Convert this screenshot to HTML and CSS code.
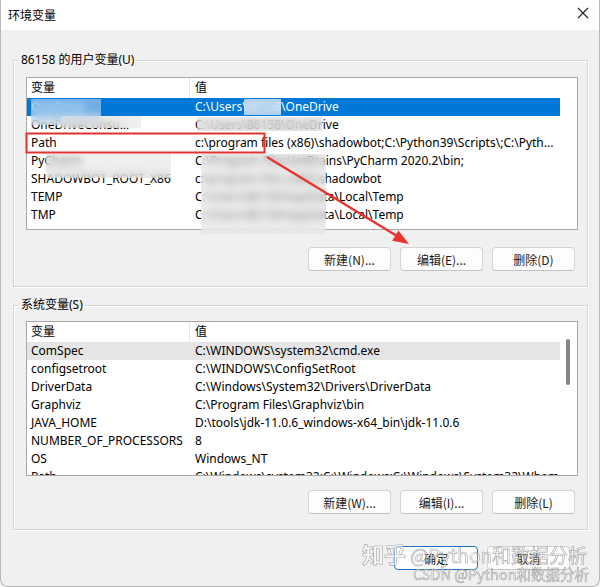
FILE: index.html
```html
<!DOCTYPE html>
<html lang="zh-CN">
<head>
    <meta charset="UTF-8">
    <meta name="viewport" content="width=device-width, initial-scale=1.0">
    <title>环境变量</title>
    <link rel="stylesheet" href="styles.css">
</head>
<body>
    <div class="dialog">
        <div class="titlebar">
            <span class="title">环境变量</span>
            <svg class="close" width="12" height="12" viewBox="0 0 12 12">
                <path d="M1 1 L11 11 M11 1 L1 11" stroke="#1f1f1f" stroke-width="1.1" fill="none"/>
            </svg>
        </div>

        <div class="content">
            <fieldset class="group group-user">
                <legend>86158 的用户变量(U)</legend>
                <div class="list list-user">
                    <div class="list-head">
                        <span class="col-name">变量</span>
                        <span class="col-value">值</span>
                    </div>
                    <div class="row selected">
                        <span class="col-name">OneDrive</span>
                        <span class="col-value">C:\Users\86158\OneDrive</span>
                    </div>
                    <div class="row">
                        <span class="col-name">OneDriveConsu...</span>
                        <span class="col-value">C:\Users\86158\OneDrive</span>
                    </div>
                    <div class="row">
                        <span class="col-name">Path</span>
                        <span class="col-value">c:\program files (x86)\shadowbot;C:\Python39\Scripts\;C:\Pyth...</span>
                    </div>
                    <div class="row">
                        <span class="col-name">PyCharm</span>
                        <span class="col-value">C:\Program Files\JetBrains\PyCharm 2020.2\bin;</span>
                    </div>
                    <div class="row">
                        <span class="col-name">SHADOWBOT_ROOT_X86</span>
                        <span class="col-value">c:\program files (x86)\shadowbot</span>
                    </div>
                    <div class="row">
                        <span class="col-name">TEMP</span>
                        <span class="col-value">C:\Users\86158\AppData\Local\Temp</span>
                    </div>
                    <div class="row">
                        <span class="col-name">TMP</span>
                        <span class="col-value">C:\Users\86158\AppData\Local\Temp</span>
                    </div>
                </div>
                <div class="buttons">
                    <button class="btn">新建(N)...</button>
                    <button class="btn">编辑(E)...</button>
                    <button class="btn">删除(D)</button>
                </div>
            </fieldset>

            <fieldset class="group group-system">
                <legend>系统变量(S)</legend>
                <div class="list list-system">
                    <div class="list-head">
                        <span class="col-name">变量</span>
                        <span class="col-value">值</span>
                    </div>
                    <div class="row hover">
                        <span class="col-name">ComSpec</span>
                        <span class="col-value">C:\WINDOWS\system32\cmd.exe</span>
                    </div>
                    <div class="row">
                        <span class="col-name">configsetroot</span>
                        <span class="col-value">C:\WINDOWS\ConfigSetRoot</span>
                    </div>
                    <div class="row">
                        <span class="col-name">DriverData</span>
                        <span class="col-value">C:\Windows\System32\Drivers\DriverData</span>
                    </div>
                    <div class="row">
                        <span class="col-name">Graphviz</span>
                        <span class="col-value">C:\Program Files\Graphviz\bin</span>
                    </div>
                    <div class="row">
                        <span class="col-name">JAVA_HOME</span>
                        <span class="col-value">D:\tools\jdk-11.0.6_windows-x64_bin\jdk-11.0.6</span>
                    </div>
                    <div class="row">
                        <span class="col-name">NUMBER_OF_PROCESSORS</span>
                        <span class="col-value">8</span>
                    </div>
                    <div class="row">
                        <span class="col-name">OS</span>
                        <span class="col-value">Windows_NT</span>
                    </div>
                    <div class="row">
                        <span class="col-name">Path</span>
                        <span class="col-value">C:\Windows\system32;C:\Windows;C:\Windows\System32\Wbem;C:\Windows</span>
                    </div>
                    <div class="scroll-thumb"></div>
                </div>
                <div class="buttons">
                    <button class="btn">新建(W)...</button>
                    <button class="btn">编辑(I)...</button>
                    <button class="btn">删除(L)</button>
                </div>
            </fieldset>

            <div class="footer">
                <button class="btn btn-default">确定</button>
                <button class="btn">取消</button>
            </div>
        </div>

        <!-- pixelated patches hiding personal paths -->
        <div class="mosaic m1"></div>
        <div class="mosaic m2"></div>
        <div class="mosaic m3"></div>
        <div class="mosaic m4"></div>
        <div class="mosaic m5"></div>
        <div class="mosaic m6"></div>

        <!-- red markup: box round Path and arrow to the edit button -->
        <svg class="markup" width="600" height="587" viewBox="0 0 600 587">
            <rect x="25.5" y="133.5" width="238" height="19" fill="none" stroke="#e0322e" stroke-width="2"/>
            <line x1="266" y1="157" x2="396" y2="236" stroke="#e8352f" stroke-width="2.5"/>
            <polygon points="408,244 391.2,240.7 397.4,230.5" fill="#e8352f"/>
        </svg>

        <div class="watermark">
            <span class="wm-zhihu"><b>知乎</b> @Python和数据分析</span>
            <span class="wm-csdn">CSDN @Python和数据分析</span>
        </div>
    </div>
</body>
</html>
```

FILE: styles.css
```css
* {
    box-sizing: border-box;
}

body {
    margin: 0;
    background: #f0f0f0;
    font-family: "Noto Sans", "Noto Sans CJK SC", sans-serif;
    font-size: 12px;
    color: #000;
}

.dialog {
    position: relative;
    width: 600px;
    height: 587px;
    background: #f0f0f0;
    border: 1px solid #b8b8b8;
    border-top: none;
    border-radius: 0 0 8px 8px;
    overflow: hidden;
}

.titlebar {
    height: 30px;
    background: #fff;
    display: flex;
    align-items: center;
    justify-content: space-between;
    padding: 0 10px 2px 7px;
}

.title {
    font-family: "Noto Sans CJK SC", sans-serif;
    font-size: 12px;
}

.close {
    margin-top: -2px;
}

.content {
    display: flex;
    flex-direction: column;
}

/* group boxes: etched frame with the caption sitting on the top line */
.group {
    margin: 0 0 0 12px;
    width: 575px;
    border: 1px solid #d6d6d6;
    box-shadow: 1px 1px 0 #fff, inset 1px 1px 0 #fff;
    padding: 9px 9px 15px 12px;
    min-width: 0;
}

.group legend {
    margin-left: -7px;
    padding: 0 2px;
    line-height: 16px;
    font-family: "Noto Sans", "Noto Sans CJK SC", sans-serif;
}

.group-user {
    margin-top: 22px;
}

.group-system {
    margin-top: 10px;
    padding-top: 8px;
}

.list {
    position: relative;
    background: #fff;
    border: 1px solid #a8a8a8;
    overflow: hidden;
    padding-right: 17px;
}

.list-user {
    height: 153px;
}

.list-system {
    height: 155px;
}

.list-head,
.row {
    display: flex;
    white-space: nowrap;
}

.list-head {
    height: 20px;
    line-height: 20px;
}

.list-head .col-name {
    border-right: 1px solid #e5e5e5;
}

.row {
    height: 18px;
    line-height: 18px;
}

.col-name {
    flex: 0 0 163px;
    padding-left: 4px;
    overflow: hidden;
}

.col-value {
    flex: 1;
    padding-left: 5px;
    overflow: hidden;
}

.row.selected {
    background: #0078d7;
    color: #fff;
}

.row.hover {
    background: #e5e5e5;
}

.scroll-thumb {
    position: absolute;
    right: 7px;
    top: 17px;
    width: 4px;
    height: 46px;
    border-radius: 2px;
    background: #858585;
}

.buttons {
    display: flex;
    justify-content: flex-end;
    gap: 9px;
    margin-top: 17px;
    padding-right: 3px;
}

.group-system .buttons {
    margin-top: 14px;
}

.btn {
    width: 83px;
    height: 24px;
    background: #fdfdfd;
    border: 1px solid #d3d3d3;
    border-bottom-color: #c2c2c2;
    border-radius: 4px;
    font-family: "Noto Sans CJK SC", sans-serif;
    font-size: 12px;
    color: #1a1a1a;
    padding: 0;
}

.footer {
    display: flex;
    justify-content: flex-end;
    gap: 9px;
    margin-top: 16px;
    padding-right: 29px;
}

.btn-default {
    width: 84px;
    border: 1px solid #1f6fc0;
    box-shadow: inset 0 0 0 1px #fff;
}

/* blurred patches */
.mosaic {
    position: absolute;
    backdrop-filter: blur(4px);
    background: rgba(225, 225, 225, 0.55);
}

.m1 { left: 30px;  top: 99px;  width: 70px;  height: 26px; background: rgba(205, 222, 240, 0.55); }
.m2 { left: 243px; top: 99px;  width: 37px;  height: 16px; background: rgba(230, 236, 245, 0.75); }
.m3 { left: 60px;  top: 116px; width: 80px;  height: 12px; }
.m4 { left: 196px; top: 117px; width: 125px; height: 14px; }
.m5 { left: 45px;  top: 154px; width: 125px; height: 24px; }
.m6 { left: 200px; top: 154px; width: 125px; height: 80px; }

.markup {
    position: absolute;
    left: 0;
    top: 0;
    pointer-events: none;
}

.watermark {
    position: absolute;
    right: 10px;
    bottom: 4px;
    display: flex;
    flex-direction: column;
    align-items: flex-end;
    font-family: "Noto Sans CJK SC", sans-serif;
    color: rgba(255, 255, 255, 0.55);
    -webkit-text-stroke: 0.6px rgba(110, 110, 110, 0.6);
    line-height: 1.1;
}

.wm-zhihu {
    font-size: 19px;
    margin-right: 2px;
}

.wm-zhihu b {
    font-size: 22px;
    font-weight: 700;
}

.wm-csdn {
    font-size: 14.5px;
    margin-right: 0;
}
```
